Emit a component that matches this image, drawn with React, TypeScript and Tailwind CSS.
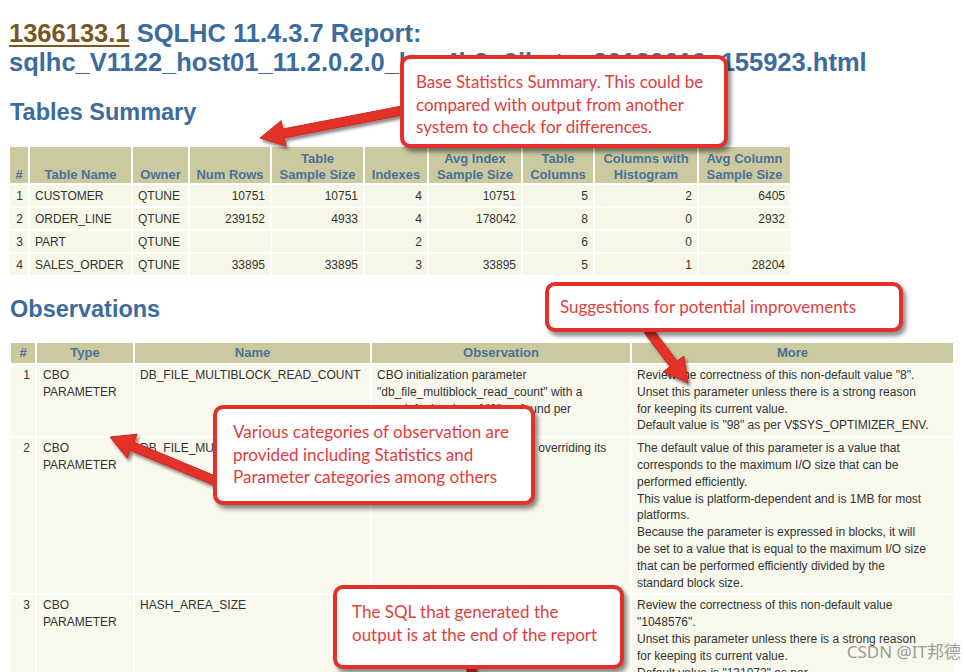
import React from "react";

type Pt = [number, number];

function arrowPoints(tail: Pt, tip: Pt, shaft = 9, headW = 26, headL = 24) {
  const dx = tip[0] - tail[0];
  const dy = tip[1] - tail[1];
  const len = Math.hypot(dx, dy);
  const ux = dx / len;
  const uy = dy / len;
  const nx = -uy;
  const ny = ux;
  const neck: Pt = [tip[0] - ux * headL, tip[1] - uy * headL];
  const p = (b: Pt, k: number): string =>
    `${(b[0] + nx * k).toFixed(1)},${(b[1] + ny * k).toFixed(1)}`;
  return [
    p(tail, shaft / 2),
    p(neck, shaft / 2),
    p(neck, headW / 2),
    `${tip[0]},${tip[1]}`,
    p(neck, -headW / 2),
    p(neck, -shaft / 2),
    p(tail, -shaft / 2),
  ].join(" ");
}

const arrows: { tail: Pt; tip: Pt }[] = [
  { tail: [405, 110], tip: [260, 138] },
  { tail: [648, 330], tip: [688, 383] },
  { tail: [218, 482], tip: [110, 437] },
  { tail: [470, 660], tip: [476, 700] },
];

const summaryHead: { label: string[]; w: string }[] = [
  { label: ["#"], w: "w-[18px]" },
  { label: ["Table Name"], w: "w-[101px]" },
  { label: ["Owner"], w: "w-[55px]" },
  { label: ["Num Rows"], w: "w-[80px]" },
  { label: ["Table", "Sample Size"], w: "w-[91px]" },
  { label: ["Indexes"], w: "w-[62px]" },
  { label: ["Avg Index", "Sample Size"], w: "w-[92px]" },
  { label: ["Table", "Columns"], w: "w-[70px]" },
  { label: ["Columns with", "Histogram"], w: "w-[102px]" },
  { label: ["Avg Column", "Sample Size"], w: "w-[91px]" },
];

const summaryRows = [
  ["1", "CUSTOMER", "QTUNE", "10751", "10751", "4", "10751", "5", "2", "6405"],
  ["2", "ORDER_LINE", "QTUNE", "239152", "4933", "4", "178042", "8", "0", "2932"],
  ["3", "PART", "QTUNE", "", "", "2", "", "6", "0", ""],
  ["4", "SALES_ORDER", "QTUNE", "33895", "33895", "3", "33895", "5", "1", "28204"],
];

const observations = [
  {
    n: "1",
    name: "DB_FILE_MULTIBLOCK_READ_COUNT",
    obs: [
      "CBO initialization parameter",
      "\"db_file_multiblock_read_count\" with a",
      "non-default value of \"8\" as found per",
      "V$SYS_OPTIMIZER_ENV.",
    ],
    more: [
      "Review the correctness of this non-default value \"8\".",
      "Unset this parameter unless there is a strong reason",
      "for keeping its current value.",
      "Default value is \"98\" as per V$SYS_OPTIMIZER_ENV.",
    ],
  },
  {
    n: "2",
    name: "DB_FILE_MULTIBLOCK_READ_COUNT",
    obs: ["MBRC Parameter is set to \"8\" overriding its", "default value."],
    more: [
      "The default value of this parameter is a value that",
      "corresponds to the maximum I/O size that can be",
      "performed efficiently.",
      "This value is platform-dependent and is 1MB for most",
      "platforms.",
      "Because the parameter is expressed in blocks, it will",
      "be set to a value that is equal to the maximum I/O size",
      "that can be performed efficiently divided by the",
      "standard block size.",
    ],
  },
  {
    n: "3",
    name: "HASH_AREA_SIZE",
    obs: [
      "CBO initialization parameter",
      "\"hash_area_size\" with a non-default",
      "value of \"1048576\" as per",
      "V$SYS_OPTIMIZER_ENV.",
    ],
    more: [
      "Review the correctness of this non-default value",
      "\"1048576\".",
      "Unset this parameter unless there is a strong reason",
      "for keeping its current value.",
      "Default value is \"131072\" as per",
      "V$SYS_OPTIMIZER_ENV.",
    ],
  },
];

function Lines({ lines }: { lines: string[] }) {
  return (
    <>
      {lines.map((l, i) => (
        <div key={i} className="whitespace-nowrap">
          {l}
        </div>
      ))}
    </>
  );
}

function Callout({
  className,
  children,
}: {
  className: string;
  children: React.ReactNode;
}) {
  return (
    <div
      className={`absolute rounded-[10px] border-[4px] border-[#e3302a] bg-white text-[17px] leading-[22.5px] text-[#e23d3d] shadow-[3px_4px_4px_rgba(0,0,0,0.45)] ${className}`}
      style={{ fontFamily: "Lato, 'Open Sans', sans-serif" }}
    >
      {children}
    </div>
  );
}

export default function App() {
  return (
    <div
      className="relative h-[672px] w-[964px] overflow-hidden bg-white text-[#333]"
      style={{ fontFamily: "'Liberation Sans', Arial, sans-serif" }}
    >
      <h1 className="ml-[9px] mt-[19px] text-[25.5px] font-bold leading-[29px] text-[#3c6b9d]">
        <span className="text-[#7a5524] underline decoration-[2px] underline-offset-[3px]">
          1366133.1
        </span>{" "}
        SQLHC 11.4.3.7 Report:
        <br />
        sqlhc_V1122_host01_11.2.0.2.0_bqs4b3q9jkqtp_20120619_155923.html
      </h1>

      <h2 className="ml-[10px] mt-[21px] text-[23.5px] font-bold leading-[28px] text-[#3c6b9d]">
        Tables Summary
      </h2>

      <table className="ml-[8px] mt-[19px] table-fixed border-separate border-spacing-[2px] text-[12px]">
        <thead>
          <tr className="h-[36px]">
            {summaryHead.map((h) => (
              <th
                key={h.label.join(" ")}
                className={`${h.w} whitespace-nowrap bg-[#cbc99d] px-[2px] align-bottom text-[13px] font-bold leading-[16px] text-[#48719a]`}
              >
                {h.label.map((l, i) => (
                  <div key={i}>{l}</div>
                ))}
              </th>
            ))}
          </tr>
        </thead>
        <tbody>
          {summaryRows.map((r) => (
            <tr key={r[0]} className="h-[21px]">
              {r.map((c, i) => (
                <td
                  key={i}
                  className={`bg-[#f7f7e8] px-[5px] leading-[14px] ${
                    i === 1 || i === 2 ? "text-left" : "text-right"
                  }`}
                >
                  {c}
                </td>
              ))}
            </tr>
          ))}
        </tbody>
      </table>

      <h2 className="ml-[10px] mt-[18px] text-[23.5px] font-bold leading-[28px] text-[#3c6b9d]">
        Observations
      </h2>

      <table className="ml-[9px] mt-[18px] w-[946px] table-fixed border-separate border-spacing-[2px] text-[12px]">
        <thead>
          <tr className="h-[20px]">
            <th className="w-[24px] bg-[#cbc99d] text-[13px] font-bold text-[#48719a]">#</th>
            <th className="w-[96px] bg-[#cbc99d] text-[13px] font-bold text-[#48719a]">Type</th>
            <th className="w-[235px] bg-[#cbc99d] text-[13px] font-bold text-[#48719a]">Name</th>
            <th className="w-[258px] bg-[#cbc99d] text-[13px] font-bold text-[#48719a]">
              Observation
            </th>
            <th className="w-[321px] bg-[#cbc99d] text-[13px] font-bold text-[#48719a]">More</th>
          </tr>
        </thead>
        <tbody className="leading-[16.8px]">
          {observations.map((o) => (
            <tr key={o.n}>
              <td className="bg-[#f8f8ec] px-[5px] py-[2px] text-right align-top">{o.n}</td>
              <td className="bg-[#f8f8ec] px-[6px] py-[2px] align-top">
                CBO
                <br />
                PARAMETER
              </td>
              <td className="bg-[#f8f8ec] px-[5px] py-[2px] align-top">{o.name}</td>
              <td className="overflow-hidden bg-[#f8f8ec] px-[5px] py-[2px] align-top">
                <Lines lines={o.obs} />
              </td>
              <td className="overflow-hidden bg-[#f8f8ec] px-[5px] py-[2px] align-top">
                <Lines lines={o.more} />
              </td>
            </tr>
          ))}
        </tbody>
      </table>

      <div
        className="absolute right-[3px] top-[639px] text-[17px] text-[#9b9b9b]"
        style={{ fontFamily: "'Noto Sans', 'Noto Sans CJK SC', sans-serif" }}
      >
        CSDN @IT邦德
      </div>

      <svg
        className="pointer-events-none absolute left-0 top-0"
        width="964"
        height="672"
        viewBox="0 0 964 672"
      >
        <defs>
          <filter id="sh" x="-20%" y="-20%" width="140%" height="140%">
            <feDropShadow dx="2" dy="3" stdDeviation="1.6" floodColor="#000" floodOpacity="0.45" />
          </filter>
        </defs>
        {arrows.map((a, i) => (
          <polygon
            key={i}
            points={arrowPoints(a.tail, a.tip)}
            fill="#e3302a"
            stroke="#d02620"
            strokeWidth="1"
            strokeLinejoin="round"
            filter="url(#sh)"
          />
        ))}
      </svg>

      <Callout className="left-[400px] top-[55px] h-[93px] w-[328px] pl-[12px] pt-[12px]">
        Base Statistics Summary. This could be
        <br />
        compared with output from another
        <br />
        system to check for differences.
      </Callout>

      <Callout className="left-[545px] top-[282px] flex h-[50px] w-[358px] items-center pl-[11px]">
        Suggestions for potential improvements
      </Callout>

      <Callout className="left-[213px] top-[405px] h-[100px] w-[322px] pl-[16px] pt-[12px]">
        Various categories of observation are
        <br />
        provided including Statistics and
        <br />
        Parameter categories among others
      </Callout>

      <Callout className="left-[333px] top-[585px] h-[84px] w-[291px] pl-[15px] pt-[12px]">
        The SQL that generated the
        <br />
        output is at the end of the report
      </Callout>
    </div>
  );
}
